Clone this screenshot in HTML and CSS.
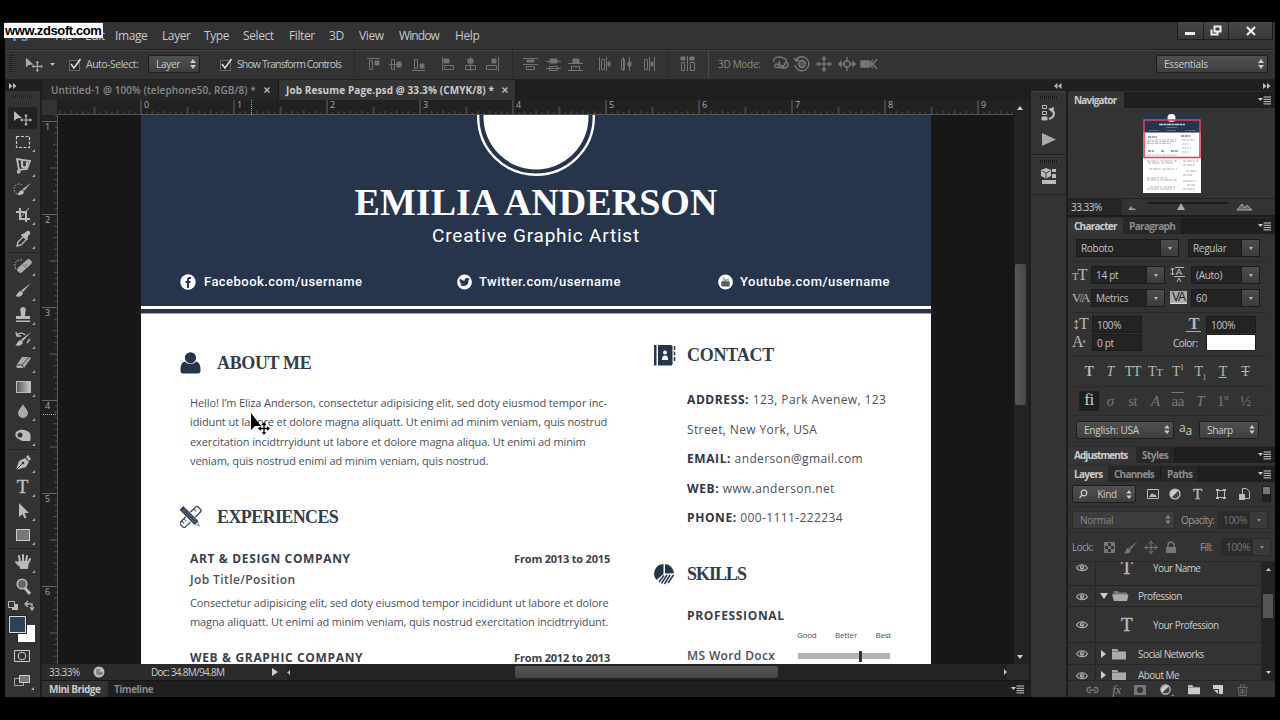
FILE: index.html
```html
<!doctype html>
<html>
  <head>
    <meta charset='utf-8'>
    <title>Job Resume Page.psd</title>
    <link rel="stylesheet" href="styles.css">
  </head>
  <body>

    <!-- shared icons -->
    <svg class='defs'>
      <symbol id='move' viewBox='0 0 20 20'>
        <path d='M1 3v10l3-2.600L9 10z' fill='currentColor'/>
        <path d='M13 7.500v9M8.500 12h9' stroke='currentColor' stroke-width='1.200'/>
        <path d='M13 6l2 2.300h-4zM13 18l2-2.300h-4zM7 12l2.300-2v4zM19 12l-2.300-2v4z' fill='currentColor'/>
      </symbol>
      <symbol id='brush' viewBox='0 0 20 20'>
        <path d='M18 3l-8 9-1.800-1.600z' fill='currentColor'/>
        <path d='M8 11l2 2c-.5 3.500-4.500 4.500-8 3 2.500-.5 2.500-5 6-5z' fill='currentColor'/>
      </symbol>
      <symbol id='folder' viewBox='0 0 14 12'>
        <path d='M0 1h5l1.500 2H14v8.500H0z' fill='currentColor'/>
        <path d='M0 3.500h14' stroke='#555' stroke-width='.6'/>
      </symbol>
      <symbol id='eye' viewBox='0 0 12 9'>
        <path d='M.5 5C2.500.8 9 .5 11.500 5 9.500 8.500 3 8.500.5 5z' fill='none' stroke='currentColor' stroke-width='1.200'/>
        <circle cx='6' cy='4.500' r='2.300' fill='currentColor'/>
        <circle cx='6.300' cy='4' r='.8' fill='#333'/>
      </symbol>
      <symbol id='updown' viewBox='0 0 6 10'>
        <path d='M0 4l3-4 3 4zM0 6l3 4 3-4z' fill='currentColor'/>
      </symbol>
      <symbol id='flyout' viewBox='0 0 13 9'>
        <path d='M0 2h5L2.500 5z' fill='currentColor'/>
        <path d='M5.500 1H13M5.500 3.300H13M5.500 5.600H13M5.500 7.900H13' stroke='currentColor'/>
      </symbol>
      <symbol id='halfcircle' viewBox='0 0 14 14'>
        <circle cx='7' cy='7' r='5' fill='#444' stroke='currentColor' stroke-width='1.200'/>
        <path d='M3.500 10.500a5 5 0 0 1 7-7z' fill='currentColor'/>
      </symbol>
      <symbol id='check' viewBox='0 0 14 13'>
        <rect x='1.500' y='2.500' width='10' height='10' fill='#2b2b2b' stroke='#666'/>
        <path d='M3 6l3 4 6.500-9' fill='none' stroke='#ddd' stroke-width='1.600'/>
      </symbol>
    </svg>

    <div class='app'>

      <div class='menubar'>
        <span class='logo'>Ps</span>
        <span class='file'>File</span>
        <span class='edit'>Edit</span>
        <span class='image'>Image</span>
        <span class='layer'>Layer</span>
        <span class='type'>Type</span>
        <span class='select'>Select</span>
        <span class='filter'>Filter</span>
        <span class='threed'>3D</span>
        <span class='view'>View</span>
        <span class='window'>Window</span>
        <span>Help</span>
        <div class='winbuttons'>
          <i><svg width='10' height='11'><path d='M0 8.500h10' stroke='#eee' stroke-width='3'/></svg></i>
          <i><svg width='12' height='11'><path d='M4.500 1.500h6v5h-6zM1.500 4.500v5h6v-3' fill='none' stroke='#eee' stroke-width='2'/></svg></i>
          <i class='close'><svg width='10' height='10'><path d='M1 1l8 8M9 1l-8 8' stroke='#eee' stroke-width='2.200'/></svg></i>
        </div>
      </div>

      <div class='options'>
        <span class='grip-v'></span>
        <svg class='opt-move' width='19' height='19'><use href='#move'/></svg>
        <svg class='opt-arrow' width='5' height='3'><path d='M0 0h5L2.500 3z' fill='#bbb'/></svg>
        <svg width='14' height='13'><use href='#check'/></svg>
        <span class='auto'>Auto-Select:</span>
        <span class='select-box layer-box'>Layer <svg width='6' height='10'><use href='#updown'/></svg></span>
        <svg width='14' height='13'><use href='#check'/></svg>
        <span class='stc'>Show Transform Controls</span>
        <svg class='align' width='333' height='28' viewBox='0 1 333 28' fill='none' stroke='#727272'>
          <path d='M4.500 1v28M162.500 1v28M318.500 1v28' stroke='#2b2b2b'/>
          <!-- vertical edges -->
          <path d='M17 9.500h13M19.500 11.500h3v9h-3zM39 15.500h13M41.500 10.500h3v10h-3zM62 21.500h13M64.500 10.500h3v9h-3z'/>
          <path d='M25 12h4v4h-4zM47 13h4v5h-4zM70 15h4v4h-4z' fill='#727272'/>
          <!-- horizontal edges -->
          <path d='M92.500 8v14M94.500 16.500h9v4h-9zM120.500 8v14M115.500 16.500h10v4h-10zM148.500 8v14M136.500 16.500h10v4h-10z'/>
          <path d='M94 10h5v4h-5zM118 10h5v4h-5zM142 10h4v4h-4z' fill='#727272'/>
          <!-- distribute -->
          <path d='M173 9.500h15M173 15.500h15M176.500 17.500h8v3h-8zM196 12.500h15M196 19.500h15M199.500 17.500h8v4h-8zM218 14.500h15M218 21.500h15M221.500 17.500h8v4h-8z'/>
          <path d='M177 11h7v2h-7zM200 10h7v4h-7zM223 10h6v4h-6z' fill='#727272'/>
          <path d='M249.500 8v14M251.500 10.500h3v10h-3zM256.500 8v14M273.500 8v14M271.500 10.500h3v10h-3zM279.500 8v14M294.500 10.500h3v10h-3zM299.500 8v14M304.500 8v14'/>
          <path d='M258 13h2v4h-2zM278 13h3v4h-3zM301 13h2v4h-2z' fill='#727272'/>
        </svg>
        <svg class='autoalign' width='16' height='16' fill='none' stroke='#777'>
          <path d='M1.500 6.500h3v8h-3zM10.500 6.500h4v8h-4zM7.500 0v15' /><path d='M1 1h4v3H1zM10 1h4v3h-4z' fill='#777'/>
        </svg>
        <span class='vline'></span>
        <span class='mode'>3D Mode:</span>
        <svg class='mode-icons' width='110' height='18' fill='none' stroke='#777' stroke-width='1.400'>
          <path d='M2 7c-2-5 6-6 9-4 3 0 4 3 3 4 4 2 2 6-2 6L3 12c-1-1 0-3 2-3l7 3M8 6a3 3 0 1 0 5 1'/>
          <circle cx='30' cy='9' r='3.500' fill='#555'/><path d='M24 5a7 7 0 1 1-1 5M22 3l2 3 3-1'/>
          <path d='M52 2.500v13M45.500 9h13M50 4.500l2-2.500 2 2.500M50 13.500l2 2.500 2-2.500M47.500 7L45 9l2.500 2M56.500 7L59 9l-2.500 2'/>
          <path d='M75 2v14M68 9h14M69 7v4l-2-2zM81 7v4l2-2z'/><circle cx='75' cy='9' r='3' fill='#333'/>
          <path d='M89 6h8v6h-8z' fill='#777'/><path d='M98 8l2-2v6l-2-2zM105 4l-4 5 4 5'/>
        </svg>
        <span class='select-box workspace'>Essentials <svg width='6' height='10'><use href='#updown'/></svg></span>
      </div>

      <div class='main'>

        <div class='toolbox'>
          <div class='strip'><svg width='8' height='6'><path d='M0 0l3.500 3L0 6zM4 0l3.500 3L4 6z' fill='#bbb'/></svg></div>
          <div class='grip'></div>
          <div class='tool active'><svg width='20' height='20'><use href='#move'/></svg></div>
          <div class='tool'><svg width='20' height='20'><rect x='3.500' y='4.500' width='13' height='11' fill='none' stroke='#ccc' stroke-width='1.200' stroke-dasharray='3 1.500'/></svg></div>
          <div class='tool'><svg width='20' height='20' fill='none' stroke='#bbb' stroke-width='1.800'><path d='M4 3l2 11 8-1 3-8-7-1-6-1zM6 14c-3 1 0 5 1 1'/><path d='M9 5v4a2.500 2.500 0 0 0 5 0V6' stroke-width='2.200'/></svg></div>
          <div class='tool'><svg width='20' height='20'><use href='#brush' x='2' y='-1' width='18' height='18'/><path d='M9 4a5 5 0 1 0-3 9' fill='none' stroke='#bbb' stroke-dasharray='1.500 1.500'/></svg></div>
          <div class='tool'><svg width='20' height='20' fill='none' stroke='#bbb' stroke-width='2'><path d='M7 3v11h10M3 7h10v10'/><path d='M7 13l9-10' stroke-width='1'/></svg></div>
          <div class='tool'><svg width='20' height='20'><path d='M4 17l1-4 6-6 3 3-6 6z' fill='none' stroke='#bbb' stroke-width='1.300'/><path d='M9 5l2-.5 3-2.500c2-1 4 1 3 3l-2.500 3 .5 2-2 1-5-5z' fill='#bbb'/></svg></div>
          <hr>
          <div class='tool'><svg width='20' height='20'><path d='M9 4a5 5 0 1 0-3 11' fill='none' stroke='#ccc' stroke-dasharray='1.500 1.500'/><rect x='3' y='7' width='17' height='6' rx='2.500' fill='#aaa' transform='rotate(-42 11.500 10)'/><path d='M10 9l3 3M12 8l2 2' stroke='#666'/></svg></div>
          <div class='tool'><svg width='20' height='20'><use href='#brush'/></svg></div>
          <div class='tool'><svg width='20' height='20' fill='#bbb'><path d='M10 2a3 3 0 0 1 2.500 4.500L12 11h5v3H3v-3h5l-.5-4.500A3 3 0 0 1 10 2zM3 15.500h14V17H3z'/></svg></div>
          <div class='tool'><svg width='20' height='20'><use href='#brush'/><path d='M4 6c3-3 7-2 8 0M3 3l1 4h4M14 14l3-4' fill='none' stroke='#bbb' stroke-width='1.400'/></svg></div>
          <div class='tool'><svg width='20' height='20'><path d='M9 4h7l2 1-7 10H4l-1-2z' fill='#aaa'/><path d='M3 12h6l2 3M9 12l7-8' fill='none' stroke='#444'/></svg></div>
          <div class='tool'><svg width='20' height='20'><linearGradient id='gr'><stop stop-color='#555'/><stop offset='1' stop-color='#ccc'/></linearGradient><rect x='3.500' y='4.500' width='14' height='11' fill='url(#gr)' stroke='#bbb'/></svg></div>
          <div class='tool'><svg width='20' height='20'><path d='M10 3c2 4 5 6 5 9a5 5 0 0 1-10 0c0-3 3-5 5-9z' fill='#aaa'/></svg></div>
          <div class='tool'><svg width='20' height='20'><path d='M3 6c5-4 10-2 13 0 2 2 2 6 1 9H9l-5-3C2 10 2 8 3 6z' fill='#bbb'/><circle cx='7' cy='9' r='2.500' fill='#333'/></svg></div>
          <hr>
          <div class='tool'><svg width='20' height='20'><path d='M3 17l3-9 6-3 4 4-3 5z' fill='#bbb'/><path d='M13 4l2-2 3 4-2 2z' fill='#bbb'/><path d='M3 17l6-6' stroke='#333'/><circle cx='10' cy='10' r='1.300' fill='#333'/></svg></div>
          <div class='tool'><span class='t'>T</span></div>
          <div class='tool'><svg width='20' height='20'><path d='M6 2v14l3.500-3 2 4.500 2-1-2-4.500H16z' fill='#bbb'/></svg></div>
          <div class='tool'><svg width='20' height='20'><rect x='3.500' y='4.500' width='13' height='11' fill='#777' stroke='#ccc'/></svg></div>
          <hr>
          <div class='tool'><svg width='20' height='20' fill='none' stroke='#bbb' stroke-linecap='round' stroke-width='2'><path d='M7 10L6 4M10 9V3M13 9l1-5M15 11l2-4M6 13l-3-3'/><path d='M6 10h9l-1 6H8z' fill='#bbb'/></svg></div>
          <div class='tool last'><svg width='20' height='20'><circle cx='9' cy='7' r='4.800' fill='#666' stroke='#bbb' stroke-width='1.600'/><path d='M12 11l5 6' stroke='#bbb' stroke-width='3'/></svg></div>
          <svg class='colors' width='36' height='95' fill='none'>
            <path d='M3.500 3.500h6v6h-6z' stroke='#bbb'/><path d='M10 6h3v6H7v-3h3z' fill='#bbb'/>
            <path d='M21 6h6v5M23 3l-3 3 3 3M25 9l2 3 2-3' stroke='#bbb' stroke-width='1.300'/>
            <path d='M13 27h17v17H13z' fill='#fff'/>
            <path d='M4.500 18.500h16v16h-16z' fill='#2c4258' stroke='#ddd'/><path d='M3.500 17.500h18v18h-18z' stroke='#222'/>
            <path d='M9.500 52.500h15v11h-15z' stroke='#ccc'/><circle cx='17' cy='58' r='3.800' stroke='#ccc'/>
            <path d='M9.500 80.500h9v7h-9z' stroke='#aaa'/><path d='M14.500 77.500h10v7h-10z' fill='#777' stroke='#ccc'/>
            <path d='M29 92v-3l-3 3z' fill='#bbb'/>
          </svg>
        </div>

        <div class='document'>
          <div class='tabs'>
            <div class='tab t1'><span>Untitled-1 @ 100% (telephone50, RGB/8) *</span><svg width='6' height='6'><path d='M.5.5l5 5M5.500.5l-5 5' stroke='#bbb' stroke-width='1.400'/></svg></div>
            <div class='tab t2'><span>Job Resume Page.psd @ 33.3% (CMYK/8) *</span><svg width='6' height='6'><path d='M.5.5l5 5M5.500.5l-5 5' stroke='#bbb' stroke-width='1.400'/></svg></div>
          </div>

          <div class='workarea'>
            <div class='left'>
              <svg class='ruler-h' width='972' height='15'>
                <defs>
                  <pattern id='inch' x='98.500' width='93' height='15' patternUnits='userSpaceOnUse'>
                    <path d='M.5 0v15' stroke='#666'/>
                    <path d='M47 7v8' stroke='#666'/>
                    <path d='M23.700 10v5M70.200 10v5M12.100 11v4M35.400 11v4M58.600 11v4M81.900 11v4' stroke='#555'/>
                    <path d='M6.300 12v3M17.900 12v3M29.600 12v3M41.200 12v3M52.800 12v3M64.400 12v3M76.100 12v3M87.700 12v3' stroke='#4a4a4a'/>
                  </pattern>
                </defs>
                <rect x='16' width='955' height='15' fill='url(#inch)'/>
                <rect width='15' height='15' fill='#333'/>
                <path d='M16 14.500h955' stroke='#555'/>
                <path d='M209.500 0v15' stroke='#aaa' stroke-dasharray='1 1'/>
                <g>
                  <text x='102' y='8'>0</text><text x='195' y='8'>1</text><text x='288' y='8'>2</text><text x='381' y='8'>3</text><text x='474' y='8'>4</text>
                  <text x='567' y='8'>5</text><text x='660' y='8'>6</text><text x='753' y='8'>7</text><text x='846' y='8'>8</text><text x='939' y='8'>9</text>
                </g>
              </svg>
              <div class='row'>
                <svg class='ruler-v' width='16' height='549'>
                  <defs>
                    <pattern id='inchv' y='6' width='16' height='93' patternUnits='userSpaceOnUse'>
                      <path d='M0 .5h16' stroke='#666'/>
                      <path d='M8 47h8' stroke='#666'/>
                      <path d='M11 23.700h5M11 70.200h5M12 12.100h4M12 35.400h4M12 58.600h4M12 81.900h4' stroke='#555'/>
                      <path d='M13 6.300h3M13 17.900h3M13 29.600h3M13 41.200h3M13 52.800h3M13 64.400h3M13 76.100h3M13 87.700h3' stroke='#4a4a4a'/>
                    </pattern>
                  </defs>
                  <rect width='16' height='549' fill='url(#inchv)'/>
                  <path d='M15.500 0v549' stroke='#555'/>
                  <path d='M1 299.500h14' stroke='#aaa' stroke-dasharray='1 1'/>
                  <g>
                    <text x='3' y='15'>1</text><text x='3' y='108'>2</text><text x='3' y='201'>3</text>
                    <text x='3' y='294'>4</text><text x='3' y='387'>5</text><text x='3' y='480'>6</text>
                  </g>
                </svg>

                <div class='canvas'>
                  <div class='page'>
                    <div class='hero'>
                      <svg class='photo' width='120' height='61'>
                        <circle cx='60' cy='2' r='57.800' fill='none' stroke='#fff' stroke-width='2.400'/>
                        <circle cx='60' cy='2' r='52.500' fill='#fff'/>
                      </svg>
                      <div class='name'>EMILIA ANDERSON</div>
                      <div class='subtitle'>Creative Graphic Artist</div>
                      <div class='social'>
                        <svg width='16' height='16'><circle cx='8' cy='8' r='7.700' fill='#fff'/><path d='M11 4H9.500Q8 4 8 6v8M5.500 8h5' fill='none' stroke='#26354b' stroke-width='1.900'/></svg>
                        <span class='fb'>Facebook.com/username</span>
                        <svg width='15' height='16'><circle cx='7.500' cy='8' r='7.400' fill='#fff'/><path d='M3 4.500q2 2.300 4.500 2.300Q7.500 4 10 4l2.500.5-1 2q0 5-4.500 5.500-2.500.2-4-1.300l2-.7q-2-1-2.500-3z' fill='#26354b'/></svg>
                        <span class='tw'>Twitter.com/username</span>
                        <svg width='15' height='16'><circle cx='7.500' cy='8' r='7.400' fill='#fff'/><rect x='3.300' y='7.300' width='8.400' height='5.200' rx='1' fill='#555'/><path d='M5 3l1 2v2M7 5v2h1V5M10 4.500V7M5 9v2.500M7.500 9v2h1M10.500 9.500v1.500' fill='none' stroke='#777' stroke-width='.9'/></svg>
                        <span>Youtube.com/username</span>
                      </div>
                    </div>
                    <div class='stripe'></div>

                    <div class='columns'>
                      <div class='col-main'>
                        <div class='heading about'>
                          <svg width='22' height='22'><circle cx='10.500' cy='5.800' r='5.600' fill='#26354b'/><path d='M4.500 9.500q6 5 12 0 4 1.500 4 7.500v2q0 2.500-3 2.500h-14q-3 0-3-2.500v-2q0-6 4-7.500z' fill='#26354b'/></svg>
                          <span>ABOUT ME</span>
                        </div>
                        <p class='bio'>Hello! I’m Eliza Anderson, consectetur adipisicing elit, sed doty eiusmod tempor inc-<br>ididunt ut labore et dolore magna aliquatt. Ut enimi ad minim veniam, quis nostrud<br>exercitation incidtrryidunt ut labore et dolore magna aliqua. Ut enimi ad minim<br>veniam, quis nostrud enimi ad minim veniam, quis nostrud.</p>

                        <div class='heading exp'>
                          <!-- pencil over ruler -->
                          <svg width='22' height='22'>
                            <g transform='translate(10.500 11) rotate(45)'>
                              <rect x='-3.500' y='-12.500' width='7' height='25' rx='2' fill='#fff' stroke='#3a4757' stroke-width='1.300'/>
                              <path d='M-3.500-8H0M-3.500 6H0M-3.500 9H0' stroke='#3a4757'/>
                            </g>
                            <g transform='translate(10.500 11) rotate(-45)'>
                              <path d='M-3-13h6V8L0 14l-3-6z' fill='#2d3a4b' stroke='#fff' stroke-width='.8'/>
                              <path d='M-3-10h6M-3-8.500h6M-1-7V8M1-7V8' stroke='#97a1ae' stroke-width='.6'/>
                              <path d='M-2.500 8.500h5L1 11.500h-2z' fill='#c5cbd3'/>
                            </g>
                          </svg>
                          <span>EXPERIENCES</span>
                        </div>
                        <div class='job'><span class='company'>ART &amp; DESIGN COMPANY</span><span class='dates'>From 2013 to 2015</span></div>
                        <div class='position'>Job Title/Position</div>
                        <p class='desc'>Consectetur adipisicing elit, sed doty eiusmod tempor incididunt ut labore et dolore<br>magna aliquatt. Ut enimi ad minim veniam, quis nostrud exercitation incidtrryidunt.</p>
                        <div class='job'><span class='company'>WEB &amp; GRAPHIC COMPANY</span><span class='dates'>From 2012 to 2013</span></div>
                      </div>

                      <div class='col-side'>
                        <div class='heading contact'>
                          <svg width='22' height='22'><path d='M0 1h2.500v20.500H0zM4 1h13q1.500 0 1.500 1.500V20q0 1.500-1.500 1.500H4z' fill='#26354b'/><path d='M20.500 2v15' stroke='#26354b' stroke-width='1.500' stroke-dasharray='4 1.500'/><circle cx='11' cy='8.500' r='2' fill='#fff'/><path d='M8 16q-.5-4.500 3-4.500t3 4.500z' fill='#fff'/></svg>
                          <span>CONTACT</span>
                        </div>
                        <div class='details'>
                          <div><b>ADDRESS:</b> 123, Park Avenew, 123</div>
                          <div>Street, New York, USA</div>
                          <div><b>EMAIL:</b> anderson@gmail.com</div>
                          <div><b>WEB:</b> www.anderson.net</div>
                          <div><b>PHONE:</b> 000-1111-222234</div>
                        </div>
                        <div class='heading skills'>
                          <svg width='22' height='22'><path d='M9.500 1v10L2.500 17A9.700 9.700 0 0 1 9.500 1zM11 1a9.700 9.700 0 0 1 9 9.300l-9 .3z' fill='#26354b'/><path d='M10 12.500l-5 6.500M13 12l-5.500 8.500M16 12l-5.500 9M19.500 12l-5.500 8' stroke='#26354b' stroke-width='1.500'/></svg>
                          <span>SKILLS</span>
                        </div>
                        <div class='pro'>PROFESSIONAL</div>
                        <div class='scale'><span>Good</span><span>Better</span><span>Best</span></div>
                        <div class='skill'><span>MS Word Docx</span><div class='bar'><i></i></div></div>
                      </div>
                    </div>
                  </div>

                  <svg class='cursor' width='22' height='24'>
                    <path d='M1 0v17l4-4h6z' fill='#000'/>
                    <path d='M14 10.500v10M9 15.500h10' stroke='#000' stroke-width='1.300'/>
                    <path d='M14 9l2.200 3h-4.400zM14 22l2.200-3h-4.400zM8 15.500l3-2.200v4.400zM20 15.500l-3-2.200v4.400z'/>
                  </svg>
                </div>
              </div>
            </div>
            <div class='vscroll'>
              <svg width='6' height='4'><path d='M0 4h6L3 0z' fill='#ccc'/></svg>
              <div class='thumb'></div>
              <svg width='6' height='4'><path d='M0 0h6L3 4z' fill='#ccc'/></svg>
            </div>
          </div>

          <div class='status'>
            <span class='zoom'>33.33%</span>
            <svg class='disk' width='12' height='12'><circle cx='6' cy='6' r='5.500' fill='#bbb'/><path d='M6 3v4h4M4 3v5h5' stroke='#555' fill='none'/></svg>
            <span class='doc'>Doc: 34.8M/94.8M</span>
            <svg class='play' width='6' height='8'><path d='M0 0l6 4-6 4z' fill='#ccc'/></svg>
            <div class='hscroll'>
              <svg width='3' height='5'><path d='M3 0v5L0 2.500z' fill='#bbb'/></svg>
              <div class='thumb'></div>
              <svg width='3' height='6'><path d='M0 0v6l3-3z' fill='#ccc'/></svg>
            </div>
          </div>

          <div class='bottom-tabs'>
            <span class='on'>Mini Bridge</span>
            <span class='off'>Timeline</span>
            <svg width='13' height='9'><use href='#flyout'/></svg>
          </div>
        </div>

        <div class='dock'>
          <div class='strip'><svg width='8' height='6'><path d='M3.500 0L0 3l3.500 3zM7.500 0L4 3l3.500 3z' fill='#bbb'/></svg></div>
          <div class='group g1'>
            <div class='grip'></div>
            <svg width='16' height='18' fill='none' stroke='#bbb'><path d='M1.500 1.500h4v3h-4zM1.500 7.500h4v3h-4z'/><path d='M1 13h5v3H1z' fill='#bbb'/><path d='M8 15c6-2 6-7 3-9' stroke-width='2'/><path d='M7 5l6-2-1 6z' fill='#bbb' stroke='none'/></svg>
            <svg width='16' height='13'><path d='M1 0l14 6.500L1 13z' fill='#aaa'/></svg>
          </div>
          <div class='group g2'>
            <div class='grip'></div>
            <svg width='16' height='17' fill='#bbb'><path d='M5 0l5 2v6l-5 2.500L0 8V2z'/><path d='M1 3l4 2 4-2M5 5v5' stroke='#444' fill='none'/><path d='M11 1h4v3h-4zM11 6h4v4h-4zM1 12h14v4H1z'/></svg>
          </div>
        </div>

        <div class='panels'>
          <div class='strip'><svg width='8' height='6'><path d='M0 0l3.500 3L0 6zM4 0l3.500 3L4 6z' fill='#bbb'/></svg></div>

          <div class='ptabs'><span class='on nav'>Navigator</span><svg width='13' height='9'><use href='#flyout'/></svg></div>
          <div class='navigator'>
            <svg width='58' height='80'>
              <rect width='58' height='80' fill='#fff'/><rect width='58' height='19.500' fill='#26354b'/>
              <circle cx='28.500' cy='5' r='4' fill='#fff'/>
              <path d='M16 11.500h26' stroke='#ccd' stroke-width='1.500' stroke-dasharray='4 .5 3 .5'/>
              <path d='M23 14.500h11M6 17.500h10M24 17.500h9M42 17.500h11' stroke='#8893a3' stroke-width='.6'/>
              <path d='M5 24h9M38 23h9M5 38h6M18 38h3M28 38h7' stroke='#445' stroke-width='1.200' stroke-dasharray='3 .7'/>
              <path d='M4 27h30M4 28.700h29M4 30.400h24M39 27h13M39 31h8M39 35h9M39 39h7M4 42h30' stroke='#aaa' stroke-width='.8' stroke-dasharray='4 .8 2 .8'/>
              <path d='M4 48h30M5 50h25M6 56h28M4 65h20M4 67h30M7 74h27M4 76h28M40 48h15M40 52h12M43 58h11M40 62h9M40 68h14M44 72h8M40 76h13' stroke='#999' stroke-width='.8' stroke-dasharray='3 1 5 .7 2 1.700'/>
              <rect x='1' y='7' width='56' height='37.500' fill='none' stroke='#d9455a' stroke-width='1.600'/>
            </svg>
          </div>
          <div class='navfoot'>
            <span>33.33%</span>
            <svg width='145' height='16' fill='#999'>
              <path d='M1 11l3-4 2 3 1-1 2 2z'/><path d='M21 4h80' stroke='#1c1c1c' stroke-width='2'/><path d='M50 11l4-7 4 7z' fill='#aaa'/>
              <path d='M110 11l5-6 3 4 2-3 5 5z' fill='#666' stroke='#aaa'/>
            </svg>
          </div>

          <div class='ptabs'><span class='on char'>Character</span><span class='off para'>Paragraph</span><svg width='13' height='9'><use href='#flyout'/></svg></div>
          <div class='character'>
            <div class='crow fonts'>
              <span class='drop w103'>Roboto</span>
              <span class='drop w71'>Regular</span>
            </div>
            <div class='crow sizes'>
              <span class='ci'><small>T</small>T</span><span class='drop w74'>14 pt</span>
              <span class='ci ci2'>
                <svg width='16' height='16' fill='none' stroke='#bbb'><path d='M2.500 1v7M.5 3l2-2 2 2M.5 6l2 2 2-2M5 .5h9M4 9.500h11M6 8l3-6 3 6M7 6h4M7 15l2-4 2 4'/></svg>
              </span><span class='drop w69'>(Auto)</span>
            </div>
            <div class='crow sizes kern'>
              <span class='ci va'>V/A</span><span class='drop w74'>Metrics</span>
              <span class='ci ci2 boxed'>VA</span><span class='drop w69'>60</span>
            </div>
            <div class='crow scalev'>
              <span class='ci'>↕T</span><span class='field'>100%</span>
              <span class='ci wide'>T</span><span class='field'>100%</span>
            </div>
            <div class='crow base'>
              <span class='ci'>A<small>ª</small></span><span class='field'>0 pt</span>
              <span class='label'>Color:</span><span class='field white'></span>
            </div>
            <div class='styles'>
              <b>T</b><i>T</i><span>TT</span><span>T<small>T</small></span><span>T<sup>1</sup></span><span>T<sub>1</sub></span><u>T</u><s>T</s>
            </div>
            <div class='styles opentype'>
              <span class='fi'>fi</span><i>σ</i><span>st</span><i>A</i><span class='over'>aa</span><i>T</i><span>1<sup>st</sup></span><span>½</span>
            </div>
            <div class='crow lang'>
              <span class='select-box english'>English: USA <svg width='6' height='9'><use href='#updown'/></svg></span>
              <span class='aa'>a<sub>a</sub></span>
              <span class='select-box sharp'>Sharp <svg width='6' height='9'><use href='#updown'/></svg></span>
            </div>
          </div>

          <div class='ptabs adj'><span class='on adjt'>Adjustments</span><span class='off'>Styles</span><svg width='13' height='9'><use href='#flyout'/></svg></div>
          <div class='ptabs lay'><span class='on'>Layers</span><span class='off chan'>Channels</span><span class='off'>Paths</span><svg width='13' height='9'><use href='#flyout'/></svg></div>

          <div class='kindrow'>
            <span class='select-box kind'><svg width='9' height='10'><circle cx='5' cy='4' r='2.800' fill='none' stroke='#ccc' stroke-width='1.200'/><path d='M3 6L.5 9' stroke='#ccc' stroke-width='1.200'/></svg>Kind <svg width='6' height='9'><use href='#updown'/></svg></span>
            <svg width='12' height='12' class='k1'><path d='M.5 1.500h11v9H.5z' fill='none' stroke='#bbb'/><path d='M2 9l3-4 2 2 1-1 2 3z' fill='#bbb'/></svg>
            <svg width='14' height='14' class='k2'><use href='#halfcircle'/></svg>
            <span class='t k3'>T</span>
            <svg width='12' height='12' class='k4' fill='none' stroke='#bbb'><path d='M2.500 2.500h7v7h-7z'/><path d='M1 1h3v2H1zM8 1h3v2H8zM1 9h3v2H1zM8 9h3v2H8z' fill='#bbb' stroke='none'/></svg>
            <svg width='12' height='12' class='k5'><path d='M4.500.5h4l3 3v7h-7z' fill='none' stroke='#bbb'/><path d='M1 6h6v6H1z' fill='#bbb'/></svg>
            <i class='switch'></i>
          </div>
          <div class='blendrow'>
            <span class='select-box normal'>Normal <svg width='6' height='9'><use href='#updown'/></svg></span>
            <span class='lb'>Opacity:</span><span class='drop dim'>100%</span>
          </div>
          <div class='lockrow'>
            <span class='lb lock'>Lock:</span>
            <svg width='74' height='16' fill='#777'>
              <path d='M.5 3.500h10v10h-10z' fill='none' stroke='#777'/><path d='M1 4h3v3H1zM7 4h3v3H7zM4 7h3v3H4zM1 10h3v3H1zM7 10h3v3H7z'/>
              <path d='M34 2l-7 8-2-1zM24 9l3 2c-1 4-4 4-7 3 2 0 1-4 4-5z'/>
              <path d='M47 3v11M41.500 8.500h11M45 5l2-3 2 3M45 12l2 3 2-3M43.500 6.500l-3 2 3 2M50.500 6.500l3 2-3 2' stroke='#777' fill='none'/>
              <path d='M62 8h10v6H62z'/><path d='M64 8V5q3-4 6 0v3' fill='none' stroke='#777' stroke-width='1.500'/>
            </svg>
            <span class='lb fill'>Fill:</span><span class='drop dim'>100%</span>
          </div>

          <div class='layerbox'>
            <div class='layers'>
              <div class='l l1'><svg class='eye'><use href='#eye'/></svg><em></em><span class='t'>T</span><span>Your Name</span></div>
              <div class='l l2'><svg class='eye'><use href='#eye'/></svg><em></em><svg class='tri' width='8' height='6'><path d='M0 0h8L4 6z' fill='#ccc'/></svg><svg class='fold' width='17' height='12'><path d='M1.500 5V1H6l1 1.500h8V5z' fill='#777'/><path d='M0 4.500h16.500L15 11H2z' fill='#aaa'/></svg><span>Profession</span></div>
              <div class='l l3'><svg class='eye'><use href='#eye'/></svg><em></em><span class='t'>T</span><span>Your Profession</span></div>
              <div class='l l4'><svg class='eye'><use href='#eye'/></svg><em></em><svg class='tri' width='8' height='8'><path d='M1 0v8l5-4z' fill='#ccc'/></svg><svg class='fold' width='14' height='12'><use href='#folder'/></svg><span class='ind'>Social Networks</span></div>
              <div class='l l5'><svg class='eye'><use href='#eye'/></svg><em></em><svg class='tri' width='8' height='8'><path d='M1 0v8l5-4z' fill='#ccc'/></svg><svg class='fold' width='14' height='12'><use href='#folder'/></svg><span class='ind'>About Me</span></div>
            </div>
            <div class='lscroll'>
              <svg width='5' height='3'><path d='M0 3h5L2.500 0z' fill='#ccc'/></svg>
              <div class='thumb'></div>
              <svg width='5' height='3'><path d='M0 0h5L2.500 3z' fill='#ccc'/></svg>
            </div>
          </div>
          <div class='layerfoot'>
            <svg width='13' height='8' fill='none' stroke='#777' stroke-width='1.300'><path d='M5 6.500H3.500a2.500 2.500 0 0 1 0-5H5M8 1.500h1.500a2.500 2.500 0 0 1 0 5H8M3.500 4h6'/></svg>
            <i class='fx'>fx</i>
            <svg width='12' height='11'><path d='M0 1h12v10H0z' fill='#777'/><circle cx='6' cy='6' r='3' fill='#333'/></svg>
            <svg width='15' height='13'><use href='#halfcircle' width='13' height='13'/><path d='M14.500 11v2.500H12z' fill='#bbb'/></svg>
            <svg width='12' height='11' class='lit'><use href='#folder'/></svg>
            <svg width='11' height='11'><path d='M0 1h10v9H6V5H0z' fill='#ccc'/><path d='M1 6h4v4z' fill='#ccc'/></svg>
            <svg width='11' height='12' fill='none' stroke='#666'><path d='M0 3.500h11M3.500 3V1h4v2M1.500 4l.5 7.500h7l.5-7.500M4 5v5M5.500 5v5M7 5v5'/></svg>
          </div>
        </div>

      </div>
    </div>

    <div class='watermark'>www.zdsoft.com</div>

  </body>
</html>
```
FILE: styles.css
```css
*{
  box-sizing: border-box;
}

body {
  margin: 0;
  width: 1280px;
  height: 720px;
  overflow: hidden;
  background: #000;
  color: #ccc;
  font: 10px/14px 'Open Sans', sans-serif;
  letter-spacing: -0.3px;
}

p {
  margin: 0;
}

svg {
  display: block;
  flex: none;
}

span {
  white-space: nowrap;
}

.defs {
  position: absolute;
  width: 0;
  height: 0;
}

.app {
  display: flex;
  flex-direction: column;
  width: 1270px;
  height: 675px;
  margin: 22px 5px 0;
  background: #333;
}

.watermark {
  position: absolute;
  left: 4px;
  top: 23px;
  width: 99px;
  height: 15px;
  background: #fff;
  color: #000;
  font: bold 13px/15px 'Liberation Sans', Arial, sans-serif;
  letter-spacing: -0.4px;
  padding-left: 1px;
}

/* menu bar */

.menubar {
  display: flex;
  height: 28px;
  border-bottom: 1px solid #222;
  font-size: 12px;
  line-height: 27px;
  letter-spacing: -0.4px;
  color: #c8c8c8;
}

.menubar span { margin-right: 17px; flex: none; }
.menubar .logo { width: 22px; margin: 0 21px 0 7px; font-size: 15px; font-weight: bold; color: #6b8fc4; }
.menubar .file { width: 20px; margin-right: 8px; }
.menubar .edit { width: 22px; margin-right: 10px; padding-left: 2px; }
.menubar .image { width: 31px; margin-right: 16px; }
.menubar .layer { width: 27px; margin-right: 15px; }
.menubar .type { width: 24px; margin-right: 15px; }
.menubar .select { width: 30px; margin-right: 16px; }
.menubar .filter { width: 26px; margin-right: 14px; }
.menubar .threed { width: 15px; margin-right: 15px; }
.menubar .view { width: 24px; margin-right: 16px; }
.menubar .window { width: 41px; margin-right: 15px; letter-spacing: -0.9px; }

.winbuttons {
  display: flex;
  width: 96px;
  height: 18px;
  margin-left: auto;
  margin-right: 2px;
  border: 1px solid #1e1e1e;
  border-top: 0;
  background: linear-gradient(#474747, #383838);
}

.winbuttons i {
  display: flex;
  width: 26px;
  align-items: center;
  justify-content: center;
  border-right: 1px solid #222;
}

.winbuttons .close { width: 43px; border: 0; }

/* options bar */

.options {
  display: flex;
  align-items: center;
  height: 30px;
  padding: 0 7px 2px 0;
  border-top: 1px solid #444;
  border-bottom: 1px solid #222;
  color: #c0c0c0;
}

.grip-v {
  width: 4px;
  height: 18px;
  margin: 0 16px 0 4px;
  background: repeating-linear-gradient(#1f1f1f 0 1px, #3c3c3c 1px 2px);
}

.opt-move { margin-left: -4px; color: #aaa; }
.opt-arrow { margin: 0 13px 0 6px; }
.auto { width: 66px; padding-left: 4px; letter-spacing: -0.5px; font-size: 10.5px; }
.stc { padding-left: 4px; width: 117px; font-size: 10.5px; letter-spacing: -0.9px; }

.select-box {
  display: flex;
  align-items: center;
  justify-content: space-between;
  height: 18px;
  padding: 0 3px 0 7px;
  border: 1px solid #1d1d1d;
  border-radius: 2px;
  background: linear-gradient(#505050, #3e3e3e);
  color: #ccc;
}

.layer-box { width: 52px; margin-right: 19px; }
.align { width: 333px; }
.autoalign { margin: 0 12px 0 -3px; }
.vline { width: 1px; height: 27px; background: #4a4a4a; margin-right: 9px; }
.mode { width: 54px; color: #888; }
.workspace { width: 112px; margin-left: auto; letter-spacing: -0.2px; }

.main {
  display: flex;
  flex: 1;
  min-height: 0;
}

.strip {
  display: flex;
  align-items: center;
  flex: none;
  height: 11px;
  background: #202020;
}

.grip {
  height: 3px;
  background: repeating-linear-gradient(90deg, #1a1a1a 0 1px, #3c3c3c 1px 2px);
}

/* toolbox */

.toolbox {
  width: 37px;
  border-right: 2px solid #1e1e1e;
}

.toolbox .strip { padding-left: 4px; }
.toolbox .grip { width: 19px; margin: 4px 0 9px 8px; }

.toolbox hr {
  height: 1px;
  margin: 1px 3px;
  border: 0;
  background: #222;
}

.tool {
  position: relative;
  display: flex;
  align-items: center;
  justify-content: center;
  width: 29px;
  height: 24.2px;
  margin-left: 3px;
  color: #bbb;
}

.tool.active {
  height: 22.2px;
  margin-top: 1px;
  margin-bottom: 1px;
  background: #222;
  border-radius: 2px;
}

.tool::after {
  content: '';
  position: absolute;
  right: 2px;
  bottom: 2px;
  border-left: 3px solid transparent;
  border-bottom: 3px solid #aaa;
}

.tool.active::after, .tool.last::after { display: none; }
.colors { margin-top: -1px; }

.t {
  font-family: 'Liberation Serif', serif;
  letter-spacing: 0;
  color: #bbb;
  -webkit-text-stroke: 0.4px #bbb;
}

.tool .t { font-size: 19px; }

/* document window */

.document {
  width: 987px;
  background: #1f1f1f;
}

.tabs {
  display: flex;
  height: 20px;
}

.tab {
  display: flex;
  align-items: center;
  height: 20px;
  font-size: 10px;
  letter-spacing: 0.1px;
  color: #8a8a8a;
}

.t1 { width: 237px; padding-left: 9px; font-weight: 600; background: #262626; border-right: 1px solid #1a1a1a; letter-spacing: 0.1px; }
.t1 span { width: 213px; }
.t2 { width: 236px; padding-left: 7px; font-weight: bold; background: #343434; color: #ccc; }
.t2 span { width: 216px; }

.workarea {
  display: flex;
  height: 564px;
}

.left { width: 972px; }
.row { display: flex; }

.ruler-h, .ruler-v { background: #212121; overflow: visible; }
.ruler-h text, .ruler-v text { fill: #aaa; font-size: 9px; }

.canvas {
  position: relative;
  width: 956px;
  height: 549px;
  overflow: hidden;
  background: #171717;
}

.vscroll, .hscroll, .lscroll {
  display: flex;
  align-items: center;
  justify-content: space-between;
}

.vscroll {
  flex-direction: column;
  width: 14px;
  padding: 6px 2px 5px 0;
  background: #232323;
}

.vscroll .thumb {
  width: 11px;
  height: 141px;
  margin-bottom: 97px;
  background: linear-gradient(90deg, #585858, #464646);
  border-radius: 2px;
}

.status {
  display: flex;
  align-items: center;
  height: 16px;
  background: #2b2b2b;
}

.zoom { width: 38px; margin-left: 7px; letter-spacing: -0.5px; }
.disk { margin: 0 48px 0 6px; }
.doc { width: 121px; margin-left: -2px; letter-spacing: -0.7px; }

.hscroll {
  width: 720px;
  height: 16px;
  margin-left: 9px;
  background: #232323;
}

.hscroll .thumb {
  width: 263px;
  height: 12px;
  margin-right: 1px;
  background: linear-gradient(#555, #434343);
  border-radius: 2px;
}

.bottom-tabs {
  display: flex;
  align-items: center;
  height: 17px;
  border-top: 1px solid #161616;
  background: #1f1f1f;
  font-weight: bold;
  color: #ccc;
}

.bottom-tabs .on { width: 66px; padding-left: 7px; background: #333; letter-spacing: -0.5px; line-height: 16px; }
.bottom-tabs .off { padding-left: 6px; color: #888; letter-spacing: -0.5px; }
.bottom-tabs svg { margin-left: auto; margin-right: 5px; }

/* the resume itself */

.page {
  width: 790px;
  margin-left: 83px;
  background: #fff;
  color: #4b5059;
  letter-spacing: 0;
}

.hero {
  height: 191px;
  background: #26354b;
  color: #fff;
  text-align: center;
}

.photo { margin: 0 auto; }

.name {
  margin-top: 5px;
  font: bold 38px/43px 'Liberation Serif', serif;
  letter-spacing: 0.05px;
}

.subtitle {
  font: 19px/24px Roboto, sans-serif;
  letter-spacing: 0.79px;
}

.social {
  display: flex;
  align-items: center;
  margin: 24px 0 0 39px;
  font: 500 13px/20px Roboto, sans-serif;
  letter-spacing: 0.49px;
}

.social svg { margin-right: 7px; }
.social svg:first-child { margin-right: 8px; }
.social .fb { width: 253px; text-align: left; letter-spacing: 0.46px; }
.social .tw { width: 239px; text-align: left; }

.stripe {
  height: 8px;
  border-top: 3px solid #fff;
  border-bottom: 1px solid #9aa5b4;
  background: #26354b;
}

.columns { display: flex; }
.col-main { width: 430px; padding: 38px 0 0 39px; flex: none; }
.col-side { width: 244px; padding: 30px 0 0 116px; margin-right: -116px; flex: none; }
.col-side { box-sizing: content-box; }

.heading {
  display: flex;
  height: 22px;
  font: bold 18px/22px 'Liberation Serif', serif;
  color: #343c49;
}

.heading svg { margin-right: 15px; }
.about { letter-spacing: -0.35px; }
.exp { margin-top: 35.5px; letter-spacing: -0.62px; }
.contact, .skills { margin-left: -33px; }
.contact { letter-spacing: -0.25px; }
.contact svg, .skills svg { margin-right: 11px; }
.skills { margin-top: 30px; letter-spacing: -1px; }

.bio, .desc {
  margin-left: 10px;
  font-size: 11px;
  line-height: 19.4px;
  letter-spacing: -0.11px;
  white-space: nowrap;
}

.bio { margin-top: 19px; }
.desc { margin-top: 3px; margin-bottom: 16.5px; }

.job {
  display: flex;
  justify-content: space-between;
  width: 420px;
  margin-left: 10px;
  font: bold 12px/20px 'Open Sans', sans-serif;
  letter-spacing: 0.65px;
  color: #3a3f49;
}

.exp + .job { margin-top: 20.5px; }
.dates { font-size: 11px; letter-spacing: -0.19px; }
.position { margin-left: 10px; font: 600 12px/21px 'Open Sans', sans-serif; letter-spacing: 0.4px; }

.details {
  margin-top: 19px;
  font-size: 12px;
  line-height: 29.5px;
  letter-spacing: 0.38px;
}

.details b { color: #2e3644; letter-spacing: 0.6px; }
.pro { margin-top: 21.5px; font: bold 12px/20px 'Open Sans', sans-serif; letter-spacing: 0.65px; color: #3a3f49; }

.scale {
  display: flex;
  justify-content: space-between;
  width: 94px;
  margin: 4px 0 5.5px 110px;
  font-size: 8px;
  line-height: 10px;
  letter-spacing: -0.2px;
}

.skill {
  display: flex;
  align-items: center;
  font: 600 12px/20px 'Open Sans', sans-serif;
  letter-spacing: 0.37px;
}

.skill span { width: 111px; }
.bar { width: 92px; height: 6px; background: #b3b3b3; }
.bar i { display: block; width: 3px; height: 11px; margin: -2px 0 0 61px; background: #333; }

.cursor {
  position: absolute;
  left: 192px;
  top: 298px;
}

/* icon dock */

.dock {
  width: 39px;
  padding-left: 2px;
  border-right: 2px solid #1e1e1e;
  background: linear-gradient(90deg, #1e1e1e 0 2px, #333 2px);
}

.dock .strip { justify-content: flex-end; padding-right: 4px; }
.dock .grip { width: 18px; margin: 4px 0 -6px; }

.group {
  display: flex;
  flex-direction: column;
  align-items: center;
  border-bottom: 1px solid #222;
  border-top: 1px solid #404040;
}

.g1 { height: 64px; gap: 11px; }
.g2 { height: 40px; gap: 11px; }

/* right panels */

.panels {
  display: flex;
  flex-direction: column;
  width: 207px;
}

.panels > div { flex: none; }
.panels .strip { justify-content: flex-end; padding-right: 4px; }

.ptabs {
  display: flex;
  align-items: center;
  height: 17px;
  background: #1f1f1f;
  border-top: 1px solid #2c2c2c;
  font-weight: bold;
  line-height: 16px;
  letter-spacing: -0.55px;
}

.ptabs span { padding: 0 6px; }
.ptabs .on { background: #363636; color: #ccc; height: 16px; }
.ptabs .off { background: #272727; color: #8c8c8c; border-right: 1px solid #1b1b1b; }
.ptabs svg { margin-left: auto; margin-right: 4px; }
.ptabs .nav { width: 56px; letter-spacing: -0.8px; }
.ptabs .char { width: 55px; letter-spacing: -0.75px; }
.ptabs .para { width: 59px; letter-spacing: -0.65px; }
.ptabs .adjt { width: 68px; letter-spacing: -0.95px; }
.ptabs.adj { margin-top: 1px; }
.ptabs.lay { margin-top: 2px; }
.ptabs.lay .on { width: 40px; letter-spacing: -0.7px; }
.ptabs.lay .chan { letter-spacing: -0.75px; width: 53px; }

.navigator { height: 90px; padding: 5px 0 0 75px; }

.navfoot {
  display: flex;
  height: 19px;
  border-top: 1px solid #222;
  border-bottom: 2px solid #1c1c1c;
  line-height: 16px;
}

.navfoot span { width: 54px; padding-left: 3px; background: #262626; margin-right: 5px; letter-spacing: -0.5px; }

.character { height: 211px; padding: 0 7px 0 4px; }
.crow { display: flex; align-items: center; }

.drop, .field {
  position: relative;
  height: 18px;
  padding-left: 4px;
  border: 1px solid #1b1b1b;
  background: #232323;
  line-height: 16px;
  color: #c4c4c4;
}

.drop::before {
  content: '';
  position: absolute;
  right: 0;
  top: 0;
  width: 17px;
  height: 16px;
  background: linear-gradient(#4c4c4c, #3c3c3c);
  border-left: 1px solid #1b1b1b;
}

.drop::after {
  content: '';
  position: absolute;
  right: 6px;
  top: 7px;
  border: 2.5px solid transparent;
  border-top: 3px solid #bbb;
  border-bottom: 0;
}

.fonts { height: 28px; padding-left: 4px; border-bottom: 1px solid #292929; gap: 9px; }
.w103 { width: 103px; }
.w71 { width: 72px; }
.w74 { width: 74px; }
.w69 { width: 69px; }
.sizes { height: 23px; }
.fonts + .sizes { margin-top: 1px; height: 24px; }
.kern { height: 26px; padding-bottom: 4px; border-bottom: 1px solid #292929; }

.ci {
  width: 19px;
  font: 16px/18px 'Liberation Serif', serif;
  letter-spacing: -1px;
  color: #b8b8b8;
}

.ci small { font-size: 11px; }
.ci2 { width: 18px; margin: 0 3px 0 5px; }
.va { font-size: 13px; letter-spacing: -2px; }
.boxed { height: 13px; background: #aaa; color: #222; font: 12px/13px 'Liberation Sans', sans-serif; text-align: center; width: 17px; margin-right: 4px; border-bottom: 1px solid #ddd; }
.scalev { height: 20px; padding-top: 2px; }
.base { height: 17px; margin-top: 1px; }
.field { width: 50px; height: 17px; }
.scalev .ci, .base .ci { width: 20px; }
.scalev .wide { width: 15px; margin: 0 5px 0 44px; font-weight: bold; text-align: center; border-bottom: 1px solid #aaa; line-height: 15px; }
.label { width: 33px; margin-left: 31px; letter-spacing: -0.5px; }
.white { background: #fff; }

.styles {
  display: flex;
  align-items: center;
  height: 30px;
  padding-left: 7px;
  border-top: 1px solid #292929;
  font: 14px/18px 'Liberation Serif', serif;
  letter-spacing: -0.5px;
  color: #b5b5b5;
}

.base + .styles { margin-top: 5px; }
.styles > * { width: 22.5px; flex: none; text-align: center; white-space: nowrap; }
.styles > :first-child { width: 20px; }
.styles small { font-size: 11px; }
.styles sup, .styles sub { font-size: 8px; line-height: 0; }
.opentype { color: #777; font-size: 15px; border-bottom: 1px solid #292929; }
.opentype .fi { height: 20px; background: #1f1f1f; color: #ccc; font-size: 17px; }
.opentype .over { text-decoration: overline; }

.lang { height: 27px; padding-left: 4px; }
.english { width: 98px; letter-spacing: -0.2px; }
.aa { width: 25px; padding-left: 5px; font-size: 12px; }
.aa sub { font-size: 12px; }
.sharp { width: 60px; }

.kindrow {
  display: flex;
  align-items: center;
  height: 25px;
  padding-left: 4px;
  border-bottom: 1px solid #292929;
}

.kind { width: 64px; padding-left: 6px; }
.k1 { margin-left: 11px; }
.k2 { margin-left: 9px; }
.k3 { margin-left: 11px; width: 11px; font-size: 15px; }
.k4 { margin-left: 11px; }
.k5 { margin-left: 11px; }
.switch { width: 9px; height: 16px; margin-left: 12px; background: linear-gradient(#777 0 7px, #222 7px); border: 1px solid #1c1c1c; }

.blendrow, .lockrow {
  display: flex;
  align-items: center;
  height: 26px;
  padding-left: 4px;
  border-bottom: 1px solid #292929;
}

.normal { width: 103px; color: #888; background: #3c3c3c; border-color: #2a2a2a; }
.blendrow .select-box svg { color: #888; }
.lb { color: #999; letter-spacing: -0.6px; }
.blendrow .lb { width: 40px; padding-left: 6px; }
.dim { width: 50px; color: #777; border-color: #292929; background: #2b2b2b; margin-left: 3px; }
.dim::before { background: #3a3a3a; border-color: #292929; }
.dim::after { border-top-color: #888; }
.lockrow { height: 29px; }
.lock { width: 32px; }
.fill { width: 18px; margin-left: 22px; }

.layerbox {
  display: flex;
  height: 118px;
}

.layers {
  width: 193px;
  overflow: hidden;
  color: #ccc;
  letter-spacing: -0.55px;
}

.l {
  display: flex;
  align-items: center;
  border-bottom: 1px solid #242424;
}

.l1 { height: 36px; margin-top: -12px; }
.l2 { height: 21px; }
.l3 { height: 36px; }
.l4 { height: 22px; }
.l5 { height: 21px; }
.l .t { width: 16px; margin: 0 16px 0 25px; font-size: 19px; }
.eye { width: 12px; height: 9px; margin-left: 8px; color: #aaa; }
.l em { width: 1px; align-self: stretch; margin-left: 7px; background: #262626; }
.tri { margin-left: 4px; }
.fold { margin-left: 4px; color: #aaa; }
.l2 .fold { margin-right: 9px; }
.ind { margin-left: 12px; }

.lscroll {
  flex-direction: column;
  width: 14px;
  padding: 6px 0;
  background: #242424;
}

.lscroll .thumb { width: 10px; height: 24px; margin-bottom: 30px; background: #555; }

.layerfoot {
  display: flex;
  align-items: center;
  height: 17px;
  padding: 1px 27px 0 18px;
  justify-content: space-between;
  border-top: 1px solid #242424;
}

.fx { font: italic 13px/13px 'Liberation Serif', serif; color: #888; }
.lit { color: #ccc; }
```
